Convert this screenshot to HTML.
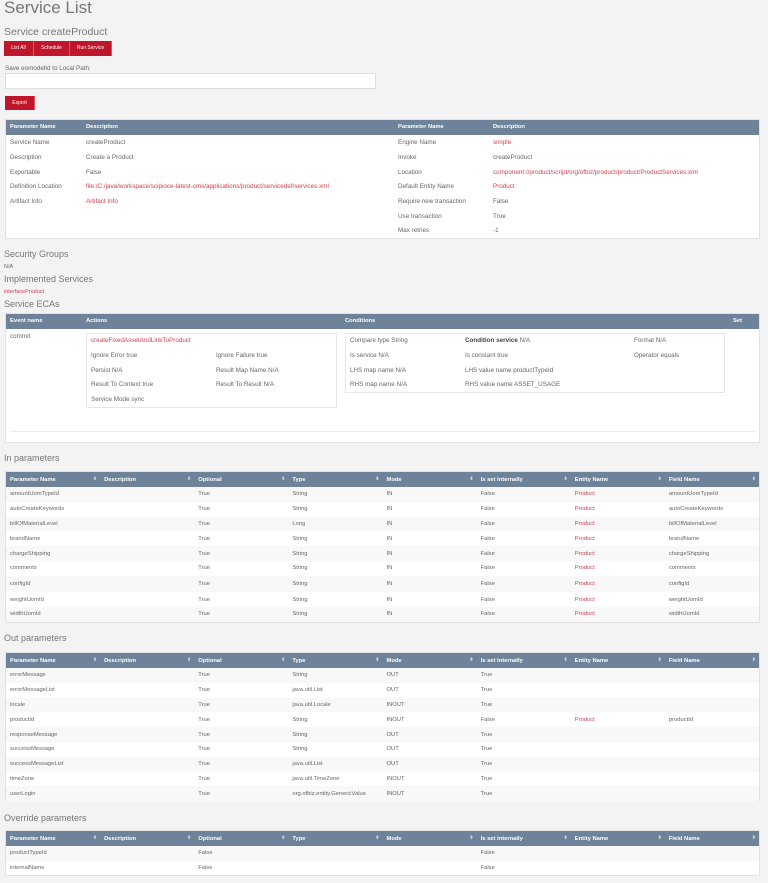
<!DOCTYPE html>
<html><head><meta charset="utf-8"><style>
*{margin:0;padding:0;box-sizing:border-box}
body{width:768px;height:883px;background:#f3f3f3;font-family:"Liberation Sans",sans-serif;color:#666;font-size:6.3px;position:relative;overflow:hidden}
.a{position:absolute;white-space:nowrap}
h1{position:absolute;left:4px;top:-2px;font-size:17px;font-weight:normal;color:#777}
.h{position:absolute;left:4px;font-size:9px;color:#777;font-weight:normal}
.btn{position:absolute;top:41px;height:15px;background:#c0162c;color:#fff;font-size:5px;line-height:15px;text-align:center;border-right:1px solid #e05060}
.panel{position:absolute;left:5px;width:755px;background:#fff;border:1px solid #e2e2e2}
.hd{position:absolute;left:0;right:0;top:0;height:15px;background:#6e8299;color:#fff;font-weight:bold;font-size:5.8px}
.hd span{position:absolute;top:4px}
.r{color:#d04050}
table{border-collapse:collapse;width:100%;table-layout:fixed}
td{height:14.8px;padding-left:4px;font-size:5.8px;vertical-align:middle;white-space:nowrap;overflow:hidden}
th{height:15px;background:#6e8299;color:#fff;text-align:left;padding-left:4px;font-size:5.8px;position:relative}
th:after{content:"⬍";position:absolute;right:3px;top:4px;font-size:5px;color:#c8d0da}
tr.s td{background:#f8f8f8}
</style></head><body>
<h1>Service List</h1>
<div class="h" style="top:26px;font-size:10.5px">Service createProduct</div>
<div class="btn" style="left:4px;width:30px">List All</div>
<div class="btn" style="left:34px;width:36px">Schedule</div>
<div class="btn" style="left:70px;width:42px">Run Service</div>
<div class="a" style="left:5px;top:65px">Save eomodelId to Local Path:</div>
<div class="a" style="left:5px;top:73px;width:371px;height:16px;background:#fff;border:1px solid #ddd"></div>
<div class="btn" style="left:5px;top:96px;width:30px;height:14px;line-height:14px">Export</div>

<div class="panel" style="top:119px;height:120px">
<div class="hd"><span style="left:4px">Parameter Name</span><span style="left:80px">Description</span><span style="left:392px">Parameter Name</span><span style="left:487px">Description</span></div>
<div class="a" style="left:4px;top:19px">Service Name</div><div class="a" style="left:80px;top:19px">createProduct</div>
<div class="a" style="left:4px;top:34px">Description</div><div class="a" style="left:80px;top:34px">Create a Product</div>
<div class="a" style="left:4px;top:49px">Exportable</div><div class="a" style="left:80px;top:49px">False</div>
<div class="a" style="left:4px;top:63px">Definition Location</div><div class="a r" style="left:80px;top:63px">file:/C:/java/workspace/scipioce-latest-cms/applications/product/servicedef/services.xml</div>
<div class="a" style="left:4px;top:78px">Artifact Info</div><div class="a r" style="left:80px;top:78px">Artifact Info</div>
<div class="a" style="left:392px;top:19px">Engine Name</div><div class="a r" style="left:487px;top:19px">simple</div>
<div class="a" style="left:392px;top:34px">Invoke</div><div class="a" style="left:487px;top:34px">createProduct</div>
<div class="a" style="left:392px;top:49px">Location</div><div class="a r" style="left:487px;top:49px">component://product/script/org/ofbiz/product/product/ProductServices.xml</div>
<div class="a" style="left:392px;top:63px">Default Entity Name</div><div class="a r" style="left:487px;top:63px">Product</div>
<div class="a" style="left:392px;top:78px">Require new transaction</div><div class="a" style="left:487px;top:78px">False</div>
<div class="a" style="left:392px;top:93px">Use transaction</div><div class="a" style="left:487px;top:93px">True</div>
<div class="a" style="left:392px;top:107px">Max retries</div><div class="a" style="left:487px;top:107px">-1</div>
</div>

<div class="h" style="top:249px">Security Groups</div>
<div class="a" style="left:4px;top:264px;font-size:5.5px">N/A</div>
<div class="h" style="top:274px">Implemented Services</div>
<div class="a r" style="left:4px;top:289px;font-size:5.5px">interfaceProduct</div>
<div class="h" style="top:299px">Service ECAs</div>

<div class="panel" style="top:313px;height:130px">
<div class="hd"><span style="left:4px">Event name</span><span style="left:80px">Actions</span><span style="left:339px">Conditions</span><span style="left:727px">Set</span></div>
<div class="a" style="left:4px;top:19px">commit</div>
<div class="a" style="left:80px;top:19px;width:251px;height:75px;border:1px solid #e6e6e6">
<div class="a r" style="left:4px;top:3px">createFixedAssetAndLinkToProduct</div>
<div class="a" style="left:4px;top:18px">Ignore Error true</div><div class="a" style="left:129px;top:18px">Ignore Failure true</div>
<div class="a" style="left:4px;top:33px">Persist N/A</div><div class="a" style="left:129px;top:33px">Result Map Name N/A</div>
<div class="a" style="left:4px;top:47px">Result To Context true</div><div class="a" style="left:129px;top:47px">Result To Result N/A</div>
<div class="a" style="left:4px;top:62px">Service Mode sync</div>
</div>
<div class="a" style="left:339px;top:19px;width:380px;height:60px;border:1px solid #e6e6e6">
<div class="a" style="left:4px;top:3px">Compare type String</div><div class="a" style="left:119px;top:3px"><b style="color:#444">Condition service</b> N/A</div><div class="a" style="left:288px;top:3px">Format N/A</div>
<div class="a" style="left:4px;top:18px">Is service N/A</div><div class="a" style="left:119px;top:18px">Is constant true</div><div class="a" style="left:288px;top:18px">Operator equals</div>
<div class="a" style="left:4px;top:33px">LHS map name N/A</div><div class="a" style="left:119px;top:33px">LHS value name productTypeId</div>
<div class="a" style="left:4px;top:47px">RHS map name N/A</div><div class="a" style="left:119px;top:47px">RHS value name ASSET_USAGE</div>
</div>
<div class="a" style="left:4px;top:117px;width:746px;border-top:1px solid #eee"></div>
</div>

<div class="h" style="top:453px">In parameters</div>
<div class="panel" style="top:471px;height:152px;border:1px solid #e2e2e2">
<table><tr><th>Parameter Name</th><th>Description</th><th>Optional</th><th>Type</th><th>Mode</th><th>Is set internally</th><th>Entity Name</th><th>Field Name</th></tr>
<tr class="s"><td>amountUomTypeId</td><td></td><td>True</td><td>String</td><td>IN</td><td>False</td><td class="r">Product</td><td>amountUomTypeId</td></tr>
<tr><td>autoCreateKeywords</td><td></td><td>True</td><td>String</td><td>IN</td><td>False</td><td class="r">Product</td><td>autoCreateKeywords</td></tr>
<tr class="s"><td>billOfMaterialLevel</td><td></td><td>True</td><td>Long</td><td>IN</td><td>False</td><td class="r">Product</td><td>billOfMaterialLevel</td></tr>
<tr><td>brandName</td><td></td><td>True</td><td>String</td><td>IN</td><td>False</td><td class="r">Product</td><td>brandName</td></tr>
<tr class="s"><td>chargeShipping</td><td></td><td>True</td><td>String</td><td>IN</td><td>False</td><td class="r">Product</td><td>chargeShipping</td></tr>
<tr><td>comments</td><td></td><td>True</td><td>String</td><td>IN</td><td>False</td><td class="r">Product</td><td>comments</td></tr>
<tr class="s"><td style="height:16.5px">configId</td><td></td><td>True</td><td>String</td><td>IN</td><td>False</td><td class="r">Product</td><td>configId</td></tr>
<tr><td>weightUomId</td><td></td><td>True</td><td>String</td><td>IN</td><td>False</td><td class="r">Product</td><td>weightUomId</td></tr>
<tr class="s"><td>widthUomId</td><td></td><td>True</td><td>String</td><td>IN</td><td>False</td><td class="r">Product</td><td>widthUomId</td></tr>
</table></div>

<div class="h" style="top:633px">Out parameters</div>
<div class="panel" style="top:652px;height:149px">
<table><tr><th>Parameter Name</th><th>Description</th><th>Optional</th><th>Type</th><th>Mode</th><th>Is set internally</th><th>Entity Name</th><th>Field Name</th></tr>
<tr class="s"><td>errorMessage</td><td></td><td>True</td><td>String</td><td>OUT</td><td>True</td><td></td><td></td></tr>
<tr><td>errorMessageList</td><td></td><td>True</td><td>java.util.List</td><td>OUT</td><td>True</td><td></td><td></td></tr>
<tr class="s"><td>locale</td><td></td><td>True</td><td>java.util.Locale</td><td>INOUT</td><td>True</td><td></td><td></td></tr>
<tr><td>productId</td><td></td><td>True</td><td>String</td><td>INOUT</td><td>False</td><td class="r">Product</td><td>productId</td></tr>
<tr class="s"><td>responseMessage</td><td></td><td>True</td><td>String</td><td>OUT</td><td>True</td><td></td><td></td></tr>
<tr><td>successMessage</td><td></td><td>True</td><td>String</td><td>OUT</td><td>True</td><td></td><td></td></tr>
<tr class="s"><td>successMessageList</td><td></td><td>True</td><td>java.util.List</td><td>OUT</td><td>True</td><td></td><td></td></tr>
<tr><td>timeZone</td><td></td><td>True</td><td>java.util.TimeZone</td><td>INOUT</td><td>True</td><td></td><td></td></tr>
<tr class="s"><td>userLogin</td><td></td><td>True</td><td>org.ofbiz.entity.GenericValue</td><td>INOUT</td><td>True</td><td></td><td></td></tr>
</table></div>

<div class="h" style="top:813px">Override parameters</div>
<div class="panel" style="top:830px;height:46px">
<table><tr><th>Parameter Name</th><th>Description</th><th>Optional</th><th>Type</th><th>Mode</th><th>Is set internally</th><th>Entity Name</th><th>Field Name</th></tr>
<tr class="s"><td>productTypeId</td><td></td><td>False</td><td></td><td></td><td>False</td><td></td><td></td></tr>
<tr><td>internalName</td><td></td><td>False</td><td></td><td></td><td>False</td><td></td><td></td></tr>
</table></div>
</body></html>
